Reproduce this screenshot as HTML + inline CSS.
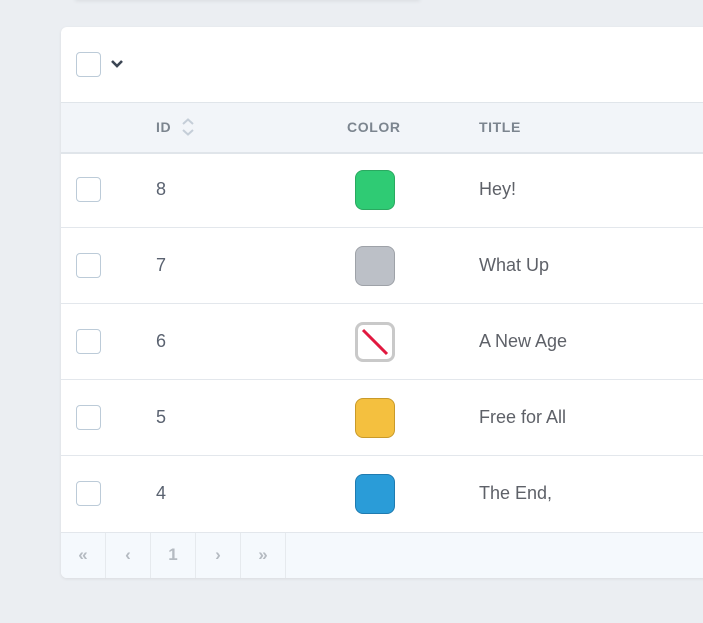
<!DOCTYPE html><html><head><style>
body{margin:0;width:703px;height:623px;background:#ebeef2;font-family:"Liberation Sans",sans-serif;position:relative;overflow:hidden}
.top{position:absolute;left:75px;top:-6px;width:345px;height:6px;box-shadow:0 1px 4px rgba(0,0,0,.08);background:#ebeef2}
.card{position:absolute;left:61px;top:27px;width:660px;height:551px;background:#fff;border-radius:6px;box-shadow:0 1px 3px rgba(0,0,0,.08);overflow:hidden}
.cb{position:absolute;left:15px;width:25px;height:25px;border:1px solid #bccbd8;border-radius:4px;box-sizing:border-box;background:#fff}
.th{position:absolute;top:75px;left:0;right:0;height:49px;background:#f2f5f9;border-top:1px solid #e0e5ea;border-bottom:2px solid #e0e5ea}
.h{position:absolute;top:16px;font-size:14px;font-weight:bold;color:#7c858f;letter-spacing:.6px}
.row{position:absolute;left:0;right:0;height:75px;border-bottom:1px solid #e3e7ec}
.row .cb{top:25px}
.id{position:absolute;left:95px;top:27px;font-size:18px;color:#5a6270}
.t{position:absolute;left:418px;top:27px;font-size:18px;color:#5e6168}
.sw{position:absolute;left:294px;top:18px;width:40px;height:40px;border-radius:8px;box-sizing:border-box}
.pg{position:absolute;top:505px;left:0;right:0;height:46px;background:#f5f9fd;border-top:1px solid #e3e7ec}
.pg div{position:absolute;top:0;width:44px;height:46px;border-right:1px solid #e6eaee;color:#b5bbc2;font-weight:bold;font-size:17px;text-align:center;line-height:44px}
</style></head><body>
<div class="top"></div>
<div class="card">
<div class="cb" style="top:25px"></div>
<svg style="position:absolute;left:49px;top:31px" width="14" height="11"><path d="M2 3 L7 8 L12 3" stroke="#3c4654" stroke-width="2.6" fill="none"/></svg>
<div class="th">
<div class="h" style="left:95px">ID</div>
<svg style="position:absolute;left:120px;top:14px" width="14" height="20"><path d="M2 7 L7 2.5 L12 7 M2 13 L7 17.5 L12 13" stroke="#c5ced8" stroke-width="2" fill="none"/></svg>
<div class="h" style="left:286px">COLOR</div>
<div class="h" style="left:418px">TITLE</div>
</div>
<div class="row" style="top:125px"><div class="cb"></div><div class="id">8</div><div class="sw" style="background:#2fcb74;border:1px solid #2aa960"></div><div class="t">Hey!</div></div>
<div class="row" style="top:201px"><div class="cb"></div><div class="id">7</div><div class="sw" style="background:#bcc0c7;border:1px solid #9ea2a8"></div><div class="t">What Up</div></div>
<div class="row" style="top:277px"><div class="cb"></div><div class="id">6</div><div class="sw" style="border:3px solid #c9c9c9;background:#fff"><svg width="34" height="34" style="position:absolute;left:0;top:0"><path d="M5 5 L29 29" stroke="#e1183f" stroke-width="3"/></svg></div><div class="t">A New Age</div></div>
<div class="row" style="top:353px"><div class="cb"></div><div class="id">5</div><div class="sw" style="background:#f4c03f;border:1px solid #c99a2a"></div><div class="t">Free for All</div></div>
<div class="row" style="top:429px;border:none"><div class="cb"></div><div class="id">4</div><div class="sw" style="background:#2a9cd8;border:1px solid #1f7bb0"></div><div class="t">The End,</div></div>
<div class="pg"><div style="left:0">«</div><div style="left:45px">‹</div><div style="left:90px">1</div><div style="left:135px">›</div><div style="left:180px">»</div></div>
</div>
</body></html>
